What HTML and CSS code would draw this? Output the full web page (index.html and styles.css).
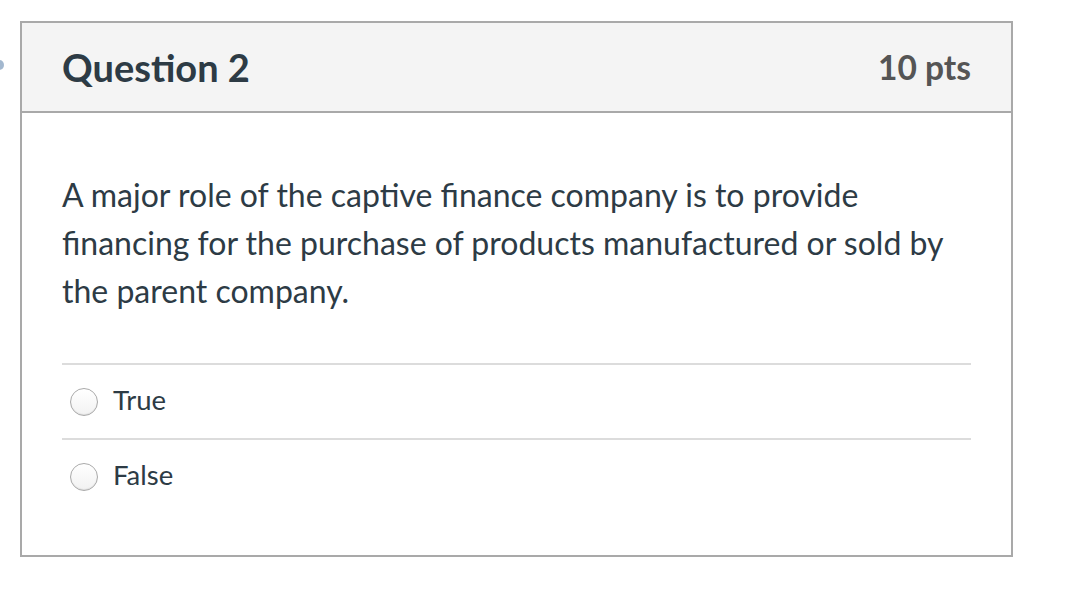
FILE: index.html
```html
<!DOCTYPE html>
<html>
<head>
<meta charset="utf-8">
<link rel="stylesheet" href="styles.css">
</head>
<body>
<div class="page">
  <span class="nav-dot"></span>
  <div class="card">
    <div class="card-header">
      <h2 class="title">Question 2</h2>
      <div class="pts">10 pts</div>
    </div>
    <div class="card-body">
      <p class="question">A major role of the captive finance company is to provide financing for the purchase of products manufactured or sold by the parent company.</p>
      <div class="answers">
        <label class="answer"><span class="radio"></span><span class="answer-text">True</span></label>
        <label class="answer"><span class="radio"></span><span class="answer-text">False</span></label>
      </div>
    </div>
  </div>
</div>
</body>
</html>
```
FILE: styles.css
```css
html, body {
  margin: 0;
  padding: 0;
  background: #fff;
}
body {
  font-family: Lato, "Liberation Sans", sans-serif;
  color: #2d3b45;
}
.page {
  position: relative;
  padding: 21px 0 0 20px;
}
.nav-dot {
  position: absolute;
  left: -5px;
  top: 60px;
  width: 9px;
  height: 10px;
  border-radius: 50%;
  background: #a3b8cf;
  filter: blur(0.6px);
}
.card {
  width: 989px;
  border: 2px solid #a9a9a9;
  box-sizing: content-box;
}
.card-header {
  background: #f4f4f4;
  border-bottom: 2px solid #a9a9a9;
  height: 88px;
  display: flex;
  align-items: center;
  justify-content: space-between;
  padding: 0 40px;
}
.title {
  margin: 0;
  font-size: 38px;
  font-weight: 700;
  color: #2d3b45;
}
.pts {
  font-size: 33.5px;
  font-weight: 700;
  color: #555;
}
.card-body {
  padding: 58px 40px 42px 40px;
}
.question {
  margin: 0 0 48px 0;
  font-size: 32px;
  line-height: 48px;
}
.answers {
  display: flex;
  flex-direction: column;
}
.answer {
  display: flex;
  align-items: center;
  height: 73px;
  border-top: 2px solid #dcdcdc;
  font-size: 27.5px;
}
.radio {
  width: 28px;
  height: 28px;
  border-radius: 50%;
  border: 1px solid #aaa;
  box-sizing: border-box;
  margin: 0 15px 0 8px;
  background: linear-gradient(#fff, #f2f2f2);
  box-shadow: inset 0 -1px 1px rgba(0,0,0,0.08);
}
.answer-text {
  color: #2d3b45;
  margin-bottom: 4px;
}
```
